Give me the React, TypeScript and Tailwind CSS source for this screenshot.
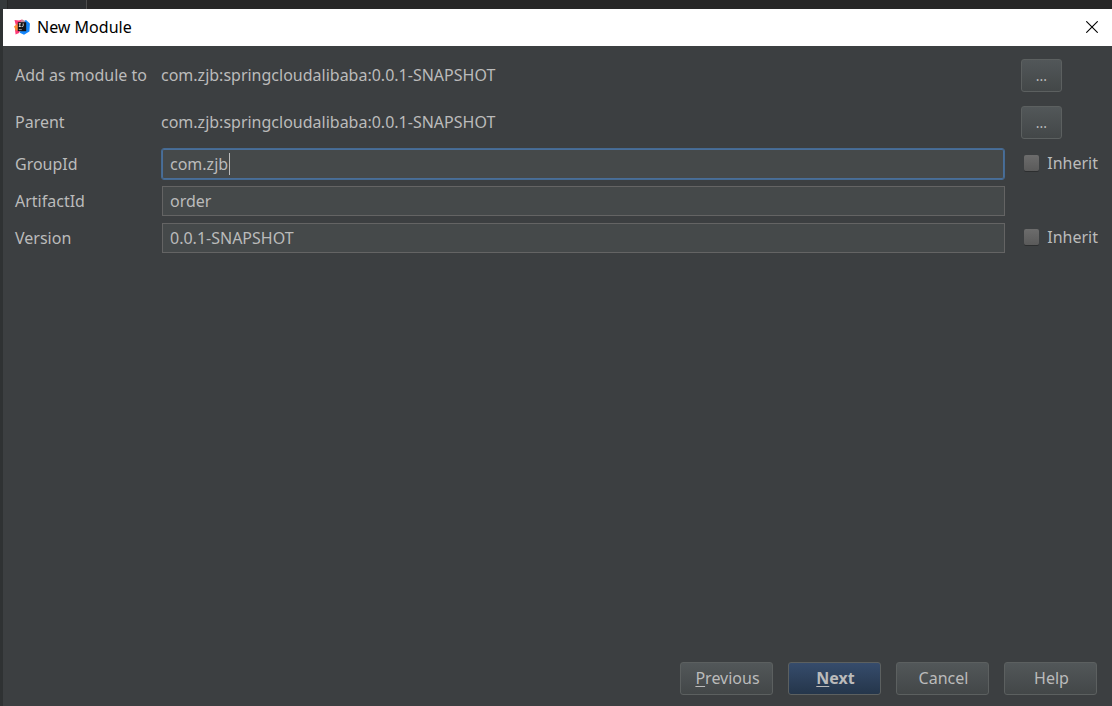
import { useState } from "react";
import type { ReactNode } from "react";
import clsx from "clsx";

const PROJECT = "com.zjb:springcloudalibaba:0.0.1-SNAPSHOT";

function IdeaLogo() {
  return (
    <svg viewBox="0 0 16 16" className="h-4 w-4" aria-hidden="true">
      <path d="M0.5 1 L5 1.6 L8 0.6 L9.5 4 L5 14 L1.6 15.4 L1 11 L2 7 Z" fill="#fe3a78" />
      <path d="M0 7.6 L3.6 4.6 L4 10.5 L2 12 Z" fill="#fc8a2d" />
      <path d="M10 2 L12 1 L15.9 4.5 L15.4 12.5 L10 15.8 L5.8 13.8 L8 7 Z" fill="#1587fc" />
      <path d="M7 1.5 L8.5 0.5 L10.8 2 L10.4 4 L6 4 Z" fill="#c98a98" />
      <rect x="3.8" y="3.2" width="8.4" height="9" fill="#141418" />
      <path
        d="M4.8 4.7 h2 M5.8 4.7 v2.8 M4.8 7.5 h2 M9.2 4.4 v2.3 q0 0.8 -0.8 0.8 h-0.8"
        fill="none"
        stroke="#fff"
        strokeWidth="0.8"
      />
      <path d="M4.8 10.6 h3" stroke="#ccc" strokeWidth="0.7" />
    </svg>
  );
}

function CloseIcon() {
  return (
    <svg viewBox="0 0 12 12" className="h-3 w-3" aria-hidden="true">
      <path d="M0.3 0.3 L11.7 11.7 M11.7 0.3 L0.3 11.7" stroke="#000" strokeWidth="1.1" />
    </svg>
  );
}

type DialogButtonProps = {
  children: ReactNode;
  primary?: boolean;
};

function DialogButton({ children, primary }: DialogButtonProps) {
  return (
    <button
      type="button"
      className={clsx(
        "h-[33px] w-[93px] rounded-[3px] border border-[#5c6060] bg-linear-to-b pb-0.5 pl-0.5 text-base leading-6",
        primary
          ? "from-[#364c6c] to-[#25364b] font-bold"
          : "from-[#525759] to-[#434748]"
      )}
    >
      {children}
    </button>
  );
}

function BrowseButton({ label }: { label: string }) {
  return (
    <button
      type="button"
      aria-label={label}
      className="h-[33px] w-[41px] rounded-[3px] border border-[#5c6060] bg-linear-to-b from-[#525759] to-[#434748] text-sm leading-6"
    >
      ...
    </button>
  );
}

function ProjectRow({ label }: { label: string }) {
  return (
    <div className="grid grid-cols-[146px_1fr_93px] items-center">
      <span className="pb-0.5">{label}</span>
      <span className="pb-0.5">{PROJECT}</span>
      <div className="flex pl-4">
        <BrowseButton label={`Choose ${label}`} />
      </div>
    </div>
  );
}

type FieldRowProps = {
  id: string;
  label: string;
  initial: string;
  active?: boolean;
  inherit?: boolean;
};

function FieldRow({ id, label, initial, active, inherit }: FieldRowProps) {
  const [value, setValue] = useState(initial);
  const [inherited, setInherited] = useState(false);

  return (
    <div className="grid grid-cols-[146px_1fr_93px] items-center">
      <label htmlFor={id}>{label}</label>
      <div className={clsx("relative flex", active ? "-mb-px" : "pt-px pl-px")}>
        <input
          id={id}
          type="text"
          value={value}
          onChange={(e) => setValue(e.target.value)}
          className={clsx(
            "w-full border bg-[#45494a] outline-none",
            active
              ? "h-8 rounded-[3px] border-[#456a92] px-2 ring-1 ring-[#4a78ad]/80 ring-inset"
              : "h-[30px] border-[#646464] px-[7px]"
          )}
        />
        {/* text cursor */}
        {active && <span className="absolute top-[5px] left-[68px] h-[22px] w-px bg-[#bbbbbb]" />}
      </div>
      {inherit && (
        <label className="flex items-center gap-2 pb-0.5 pl-[19px]">
          <input
            type="checkbox"
            checked={inherited}
            onChange={(e) => setInherited(e.target.checked)}
            className="h-4 w-4 appearance-none rounded-[2px] bg-linear-to-b from-[#6c6c6c] to-[#5a5a5a] shadow-[0_1px_0_#2c2e2f] checked:from-[#4a78a8] checked:to-[#3a6290]"
          />
          Inherit
        </label>
      )}
    </div>
  );
}

export default function App() {
  return (
    <div className="flex min-h-screen flex-col bg-[#2f3233] pl-[3px] font-['Noto_Sans','Open_Sans',sans-serif] text-base leading-6 text-[#bbbbbb]">
      {/* editor behind the dialog */}
      <div className="-ml-[3px] flex h-[9px]">
        <div className="w-2 border-r border-[#252626] bg-[#35393b]" />
        <div className="w-[79px] border-r border-[#4d4d4d] bg-[#2c2e30]" />
        <div className="grow bg-[#272727]" />
      </div>

      <div role="dialog" aria-label="New Module" className="flex grow flex-col bg-[#3c3f41]">
        <header className="flex h-[37px] items-center bg-white pr-[14px] pb-px pl-[11px] text-black">
          <IdeaLogo />
          <h1 className="ml-[7px] grow text-base">New Module</h1>
          <button type="button" aria-label="Close">
            <CloseIcon />
          </button>
        </header>

        <main className="flex grow flex-col pt-[13px] pr-[14px] pl-3">
          <div className="flex flex-col gap-[14px]">
            <ProjectRow label="Add as module to" />
            <ProjectRow label="Parent" />
          </div>
          <div className="mt-[9px] flex flex-col gap-[6px]">
            <FieldRow id="group-id" label="GroupId" initial="com.zjb" active inherit />
            <FieldRow id="artifact-id" label="ArtifactId" initial="order" />
            <FieldRow id="version" label="Version" initial="0.0.1-SNAPSHOT" inherit />
          </div>
        </main>

        <footer className="flex justify-end gap-[15px] pr-[15px] pb-[11px]">
          <DialogButton>
            <u className="underline-offset-2">P</u>revious
          </DialogButton>
          <DialogButton primary>
            <u className="underline-offset-2">N</u>ext
          </DialogButton>
          <DialogButton>Cancel</DialogButton>
          <DialogButton>Help</DialogButton>
        </footer>
      </div>
    </div>
  );
}
